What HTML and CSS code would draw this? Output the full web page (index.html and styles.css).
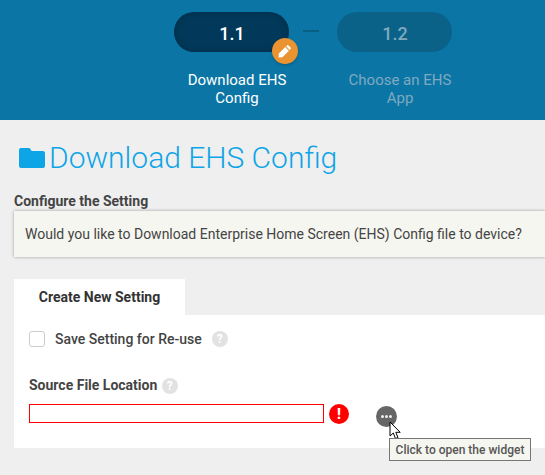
FILE: index.html
```html
<!DOCTYPE html>
<html lang="en">
<head>
    <meta charset="UTF-8">
    <title>Download EHS Config</title>
    <link rel="stylesheet" href="styles.css">
</head>
<body>
    <div class="stepper">
        <div class="step step-active">
            <div class="step-pill">
                1.1
                <span class="edit-badge">
                    <svg width="14" height="14" viewBox="0 0 14 14"><path fill="#fff" d="M10.2 1.2 12.8 3.8c.3.3.3.7 0 1L11.7 5.900 8.100 2.300 9.200 1.200c.3-.3.7-.3 1 0ZM7.300 3.100 10.900 6.700 4.400 13.200 0.500 13.500 0.800 9.600Z"/></svg>
                </span>
            </div>
            <div class="step-label">Download EHS Config</div>
        </div>
        <div class="step-dash"></div>
        <div class="step step-off">
            <div class="step-pill">1.2</div>
            <div class="step-label">Choose an EHS App</div>
        </div>
    </div>

    <div class="content">
        <h1 class="page-title">
            <svg width="26" height="20" viewBox="0 0 26 20"><path fill="#0ea5e6" d="M2 0h7.500c1 0 1.500.5 2 1.200L12.700 3H24c1.100 0 2 .9 2 2v13c0 1.100-.9 2-2 2H2c-1.100 0-2-.9-2-2V2C0 .9.900 0 2 0Z"/></svg>
            Download EHS Config
        </h1>

        <div class="section-label">Configure the Setting</div>
        <div class="question">Would you like to Download Enterprise Home Screen (EHS) Config file to device?</div>

        <div class="tab">Create New Setting</div>
        <div class="panel">
            <div class="save-row">
                <span class="checkbox"></span>
                <span class="save-label">Save Setting for Re-use</span>
                <span class="help">?</span>
            </div>
            <div class="field-label">Source File Location <span class="help help-small">?</span></div>
            <div class="field-row">
                <div class="text-input"></div>
                <span class="error-icon">!</span>
                <span class="widget-btn"><i></i><i></i><i></i></span>
                <svg class="cursor" width="14" height="20" viewBox="0 0 14 20"><path fill="#fff" stroke="#000" stroke-width="1" d="M1 1V15L4.300 12 6.500 17.500 9 16.500 6.800 11.300H11.200Z"/></svg>
                <div class="tooltip">Click to open the widget</div>
            </div>
        </div>
    </div>
</body>
</html>
```

FILE: styles.css
```css
body {
    margin: 0;
    height: 475px;
    overflow: hidden;
    background-color: #efefef;
    font-family: Roboto, "Liberation Sans", sans-serif;
    color: #444;
}

/* Stepper */
.stepper {
    height: 120px;
    box-sizing: border-box;
    padding: 12px 0 0 174px;
    background-color: #0b76a6;
    display: flex;
    align-items: flex-start;
}
.step {
    width: 115px;
    text-align: center;
}
.step-pill {
    position: relative;
    height: 40px;
    padding-left: 1px;
    border-radius: 20px;
    font-size: 18px;
    font-weight: 500;
    line-height: 43px;
}
.step-active .step-pill {
    background-color: #02395a;
    box-shadow: inset 0 0 6px rgba(0, 0, 0, 0.25);
    color: #fff;
}
.step-off .step-pill {
    background-color: #0a6288;
    color: #7fa9bf;
}
.step-label {
    margin: 19px 0 0 11px;
    font-size: 15px;
    line-height: 18px;
    color: #fff;
}
.step-off .step-label {
    color: #7fa9bf;
}
.step-dash {
    width: 16px;
    height: 2px;
    margin: 18px 18px 0 14px;
    background-color: #0a5f85;
}
.edit-badge {
    position: absolute;
    right: -9px;
    bottom: -12px;
    width: 26px;
    height: 26px;
    border-radius: 50%;
    background-color: #e99331;
    box-shadow: 0 1px 3px rgba(0, 0, 0, 0.25);
    display: flex;
    align-items: center;
    justify-content: center;
}

/* Main */
.content {
    padding-left: 14px;
}
.page-title {
    margin: 0;
    padding: 17px 0 0 5px;
    height: 41px;
    display: flex;
    align-items: center;
    gap: 4px;
    font-size: 30px;
    font-weight: 300;
    line-height: 41px;
    color: #0ea5e6;
    white-space: nowrap;
}
.section-label {
    margin-top: 15px;
    font-size: 14px;
    font-weight: 700;
    line-height: 17px;
    color: #444;
}
.question {
    height: 46px;
    margin-top: 1px;
    padding-left: 11px;
    background-color: #f6f6f0;
    box-shadow: 0 0 3px rgba(0, 0, 0, 0.35);
    font-size: 14px;
    line-height: 46px;
    white-space: nowrap;
    overflow: hidden;
}
.tab {
    width: 171px;
    height: 36px;
    margin-top: 22px;
    background-color: #fff;
    font-size: 14px;
    font-weight: 700;
    line-height: 37px;
    text-align: center;
    color: #333;
}
.panel {
    height: 133px;
    box-sizing: border-box;
    padding: 16px 0 0 15px;
    background-color: #fff;
}
.save-row {
    display: flex;
    align-items: center;
    height: 16px;
    font-size: 14px;
    font-weight: 500;
}
.checkbox {
    width: 14px;
    height: 14px;
    border: 1px solid #ccc;
    border-radius: 3px;
}
.save-label {
    margin-left: 10px;
}
.help {
    width: 16px;
    height: 16px;
    margin-left: 10px;
    border-radius: 50%;
    background-color: #e2e2e2;
    color: #fff;
    font-size: 12px;
    font-weight: 700;
    line-height: 16px;
    text-align: center;
    display: inline-block;
}
.help-small {
    margin-left: 1px;
}
.field-label {
    margin-top: 30px;
    font-size: 14px;
    font-weight: 700;
    line-height: 17px;
}
.field-row {
    position: relative;
    display: flex;
    margin-top: 10px;
}
.text-input {
    width: 295px;
    height: 19px;
    box-sizing: border-box;
    border: 1px solid red;
    background-color: #fff;
}
.error-icon {
    width: 20px;
    height: 20px;
    margin-left: 5px;
    border-radius: 50%;
    background-color: #f00;
    color: #fff;
    font-size: 14px;
    font-weight: 900;
    line-height: 20px;
    text-align: center;
}
.widget-btn {
    width: 21px;
    height: 21px;
    margin: 2px 0 0 27px;
    border-radius: 50%;
    background-color: #666;
    display: flex;
    align-items: center;
    justify-content: center;
    gap: 1px;
}
.widget-btn i {
    width: 3px;
    height: 3px;
    border-radius: 50%;
    background-color: #eee;
}
.cursor {
    position: absolute;
    left: 360px;
    top: 17px;
}
.tooltip {
    position: absolute;
    left: 360px;
    top: 34px;
    width: 142px;
    height: 23px;
    box-sizing: border-box;
    border: 1px solid #767676;
    background-color: #f6f6f0;
    font-size: 12px;
    font-weight: 500;
    line-height: 23px;
    text-align: center;
    color: #555;
    white-space: nowrap;
}
```
